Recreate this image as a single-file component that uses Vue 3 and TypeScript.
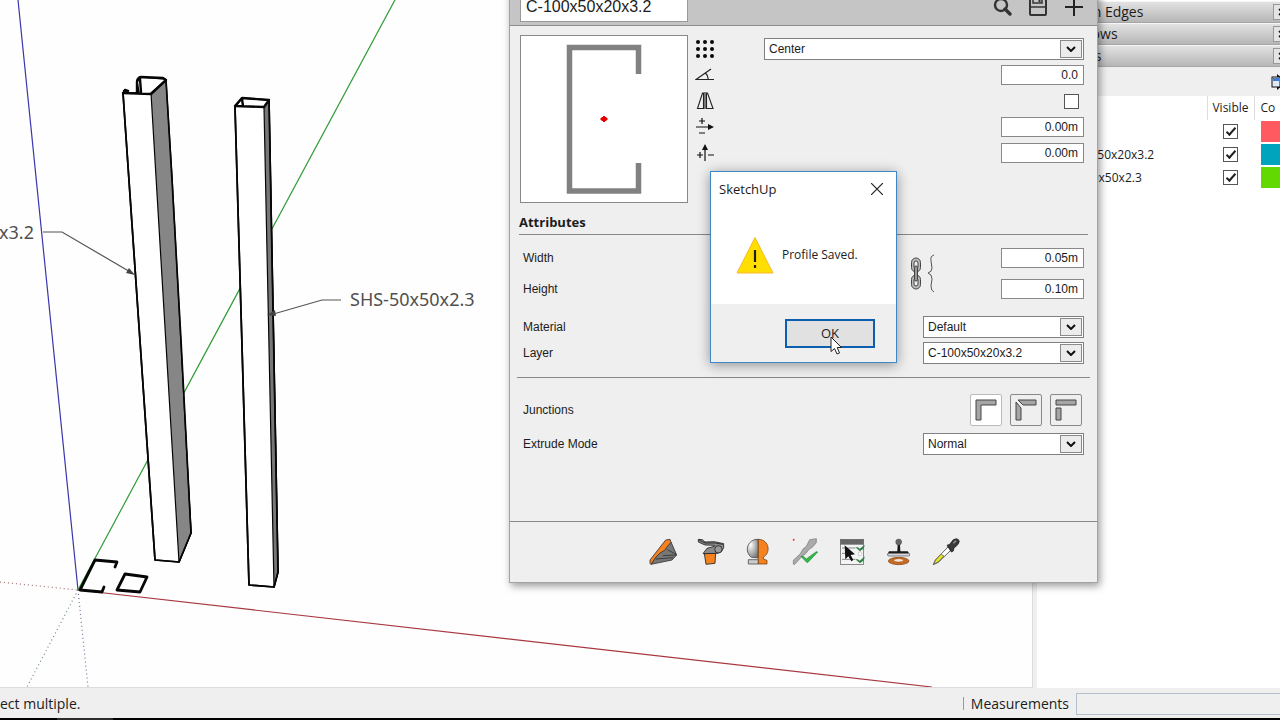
<script setup lang="ts">
import { ref } from 'vue'

interface Layer {
  name: string
  visible: boolean
  swatch: string
}

const profileName = ref('C-100x50x20x3.2')
const placement = ref('Center')
const rotation = ref('0.0')
const mirrored = ref(false)
const offsetX = ref('0.00m')
const offsetY = ref('0.00m')
const profileWidth = ref('0.05m')
const profileHeight = ref('0.10m')
const material = ref('Default')
const layer = ref('C-100x50x20x3.2')
const extrudeMode = ref('Normal')
const junction = ref(0)
const measurement = ref('')

const trays = ['Soften Edges', 'Shadows', 'Layers']
const layers = ref<Layer[]>([
  { name: 'Layer0', visible: true, swatch: 'red' },
  { name: 'C-100x50x20x3.2', visible: true, swatch: 'teal' },
  { name: 'SHS-50x50x2.3', visible: true, swatch: 'green' },
])
</script>

<template>
  <div class="app">
    <div class="workspace">
      <main class="viewport">
        <svg class="scene" viewBox="0 0 1032 687" preserveAspectRatio="xMinYMin slice" aria-label="Model view">
          <g fill="none" stroke-width="1.2">
            <path d="M18 0L78 590" stroke="#3a36ad" />
            <path d="M396 -2L78 590" stroke="#2f9a33" />
            <path d="M78 590L932 687" stroke="#a83840" />
            <g stroke-dasharray="1 3">
              <path d="M0 582L78 590" stroke="#a07070" />
              <path d="M78 590L27 687" stroke="#6f9070" />
              <path d="M78 590L88 687" stroke="#6f6f9c" />
            </g>
          </g>
          <g stroke="#060606" stroke-width="1.700" stroke-linejoin="round" stroke-linecap="round">
            <path d="M123 93L139 93L137 82L140 77L165 79L191 533L179 562L155 560Z" fill="#fff" />
            <path d="M151 93L166 80L172 175L191 533L179 562Z" fill="#868686" stroke-width="1.2" />
            <path d="M166 80L172 180L181 340L191 533L179 562L155 560L123 93" fill="none" />
            <path d="M123 93L151 94L166 80L163 78L141 77Q137 78 137 82L137 93M125 90L128 91M140 79L141 92M124 91L128 91" fill="none" stroke-width="2.4" />
            <path d="M235 107L242 98L269 100L278 572L274 587L249 585Z" fill="#fff" />
            <path d="M264 107L269 100L278 572L274 587Z" fill="#777" stroke-width="1.2" />
            <path d="M235 107L249 585L274 587L278 572L269 100" fill="none" />
            <path d="M235 106L242 98L269 100L264 107ZM242 99L243 106" fill="none" stroke-width="2.4" />
            <path d="M104 587L102 592L80 590L95 560L117 562L115 567" fill="none" stroke-width="2.800" />
            <path d="M117 590L125 574L147 577L140 592Z" fill="none" stroke-width="2.800" />
          </g>
          <g fill="none" stroke="#555" stroke-width="1.2">
            <path d="M43 232H62L132 273" />
            <path d="M341 300H322L270 315" />
          </g>
          <g fill="#444">
            <path d="M135 275L126 273L129 268Z" />
            <path d="M267 315L275 310L276 316Z" />
          </g>
          <g class="scene-label">
            <text x="34" y="239" text-anchor="end">x3.2</text>
            <text x="350" y="306">SHS-50x50x2.3</text>
          </g>
        </svg>
      </main>

      <aside class="tray">
        <div class="tray-inner">
          <header v-for="t in trays" :key="t" class="tray-head">
            <span>{{ t }}</span>
            <button type="button" :aria-label="'Close ' + t">
              <svg width="8" height="8" viewBox="0 0 8 8"><path d="M1 1L7 7M7 1L1 7" stroke="#111" stroke-width="1.6" /></svg>
            </button>
          </header>
          <div class="tray-tools">
            <button type="button" aria-label="Details">
              <svg width="18" height="18" viewBox="0 0 18 18">
                <path d="M6 1L16 9L6 17V14H1V4H6Z" fill="#111" />
                <rect x="1" y="4" width="8" height="10" fill="#dfe9f7" stroke="#111" />
                <rect x="2" y="5" width="6" height="3" fill="#3f7bd8" />
              </svg>
            </button>
          </div>
          <table class="layers">
            <thead>
              <tr><th class="col-name">Name</th><th class="col-visible">Visible</th><th class="col-color">Co</th></tr>
            </thead>
            <tbody>
              <tr v-for="l in layers" :key="l.name">
                <td class="col-name">{{ l.name }}</td>
                <td class="col-visible"><input v-model="l.visible" type="checkbox" class="check" :aria-label="l.name + ' visible'"></td>
                <td class="col-color"><span class="swatch" :class="l.swatch"></span></td>
              </tr>
            </tbody>
          </table>
        </div>
      </aside>
    </div>

    <footer class="status">
      <span class="hint">ect multiple.</span>
      <label for="measure">Measurements</label>
      <input id="measure" v-model="measurement" type="text">
    </footer>
    <div class="edge"><span></span></div>

    <section class="panel" aria-label="Profile">
      <header class="panel-head">
        <input v-model="profileName" type="text" aria-label="Profile name">
        <div class="head-tools">
          <button type="button" aria-label="Search">
            <svg width="20" height="20" viewBox="0 0 20 20" fill="none" stroke="#333"><circle cx="9" cy="8" r="6" stroke-width="2.4" /><path d="M13 12L18 17" stroke-width="3.4" stroke-linecap="round" /></svg>
          </button>
          <button type="button" aria-label="Save">
            <svg width="20" height="20" viewBox="0 0 20 20" fill="none" stroke="#333" stroke-width="2"><path d="M2 1H16L18 3V17Q18 18 17 18H3Q2 18 2 17Z" /><path d="M5 1V6H14V1" stroke-width="1.500" /><path d="M11.500 1V5" /><path d="M2.500 10H17.500" stroke-width="1.500" /></svg>
          </button>
          <button type="button" aria-label="Add">
            <svg width="20" height="20" viewBox="0 0 20 20"><path d="M1 10H19M10 1V19" stroke="#222" stroke-width="2" /></svg>
          </button>
        </div>
      </header>

      <div class="panel-body">
        <div class="placement">
          <div class="preview">
            <svg width="166" height="166" viewBox="0 0 166 166">
              <path d="M117.500 38V11.500H48.500V155H117.500V127" fill="none" stroke="#818181" stroke-width="5.500" />
              <path d="M79 83L81 81H82V80H84V81H85L87 83L85 85H84V86H82V85H81Z" fill="#e60000" />
            </svg>
          </div>
          <div class="rows">
            <div class="row">
              <label for="place" aria-label="Placement point">
                <svg width="20" height="20" viewBox="0 0 20 20" fill="#0a0a0a"><circle cx="3" cy="3" r="2" /><circle cx="10" cy="3" r="2" /><circle cx="17" cy="3" r="2" /><circle cx="3" cy="10" r="2" /><circle cx="10" cy="10" r="2" /><circle cx="17" cy="10" r="2" /><circle cx="3" cy="17" r="2" /><circle cx="10" cy="17" r="2" /><circle cx="17" cy="17" r="2" /></svg>
              </label>
              <div class="select wide">
                <select id="place" v-model="placement"><option>Center</option></select>
                <span class="arrow"><svg width="10" height="6" viewBox="0 0 10 6"><path d="M1 1L5 5L9 1" fill="none" stroke="#111" stroke-width="2" /></svg></span>
              </div>
            </div>
            <div class="row">
              <label for="rot" aria-label="Rotation">
                <svg width="20" height="20" viewBox="0 0 20 20" fill="none" stroke="#222" stroke-width="1.200"><path d="M19 14.500H1L16 4M10.500 8Q13.500 11 13 14.500" /></svg>
              </label>
              <input id="rot" v-model="rotation" type="text" class="num">
            </div>
            <div class="row">
              <label for="mirror" aria-label="Mirror">
                <svg width="20" height="20" viewBox="0 0 20 20" fill="none" stroke="#222" stroke-width="1.100"><path d="M8.500 2V17.500H2.500L7.500 2ZM11.500 2V17.500H18L12.500 2ZM10 1V18" /></svg>
              </label>
              <input id="mirror" v-model="mirrored" type="checkbox" class="check mirror">
            </div>
            <div class="row">
              <label for="offx" aria-label="Horizontal offset">
                <svg width="20" height="20" viewBox="0 0 20 20" stroke="#111" stroke-width="1.200"><path d="M1 10H14M4 4H10M7 1V7M4 16H10" /><path d="M13 7L19 10L13 13Z" fill="#111" stroke="none" /></svg>
              </label>
              <input id="offx" v-model="offsetX" type="text" class="num">
            </div>
            <div class="row">
              <label for="offy" aria-label="Vertical offset">
                <svg width="20" height="20" viewBox="0 0 20 20" stroke="#111" stroke-width="1.200"><path d="M10 6V18M2 12H8M5 9V15M13 12H19" /><path d="M7 7L10 1L13 7Z" fill="#111" stroke="none" /></svg>
              </label>
              <input id="offy" v-model="offsetY" type="text" class="num">
            </div>
          </div>
        </div>

        <h2>Attributes</h2>
        <div class="dims">
          <label for="w">Width</label>
          <svg class="link" width="26" height="40" viewBox="0 0 26 40" fill="none">
            <g stroke="#444"><rect x="1.500" y="5" width="9" height="14" rx="4.500" fill="#bbb" /><rect x="4" y="8" width="4" height="8" rx="2" fill="#eee" /><rect x="1.500" y="22" width="9" height="14" rx="4.500" fill="#bbb" /><rect x="4" y="25" width="4" height="8" rx="2" fill="#eee" /><rect x="4.500" y="13" width="3" height="15" rx="1.500" fill="#999" /></g>
            <path d="M24 2Q20 3 21 8L22 15Q22 19 18 20Q22 21 22 26L21 33Q21 38 24 39" stroke="#555" />
          </svg>
          <input id="w" v-model="profileWidth" type="text" class="num">
          <label for="h">Height</label>
          <input id="h" v-model="profileHeight" type="text" class="num">
        </div>
        <div class="assign">
          <div class="line">
            <label for="mat">Material</label>
            <div class="select">
              <select id="mat" v-model="material"><option>Default</option></select>
              <span class="arrow"><svg width="10" height="6" viewBox="0 0 10 6"><path d="M1 1L5 5L9 1" fill="none" stroke="#111" stroke-width="2" /></svg></span>
            </div>
          </div>
          <div class="line">
            <label for="lay">Layer</label>
            <div class="select">
              <select id="lay" v-model="layer"><option>C-100x50x20x3.2</option></select>
              <span class="arrow"><svg width="10" height="6" viewBox="0 0 10 6"><path d="M1 1L5 5L9 1" fill="none" stroke="#111" stroke-width="2" /></svg></span>
            </div>
          </div>
        </div>
        <hr>
        <div class="line junctions">
          <span>Junctions</span>
          <div class="joints">
            <button type="button" aria-label="Mitre joint" :class="{ active: junction === 0 }" @click="junction = 0">
              <svg width="22" height="22" viewBox="0 0 22 22"><path d="M1 1H21V6H6V21H1Z" fill="#a5a5a5" stroke="#444" /></svg>
            </button>
            <button type="button" aria-label="Split joint" :class="{ active: junction === 1 }" @click="junction = 1">
              <svg width="22" height="22" viewBox="0 0 22 22" fill="#a5a5a5" stroke="#444"><path d="M3 1H21V6H8Z" /><path d="M1 3L6 9V21H1Z" /></svg>
            </button>
            <button type="button" aria-label="Butt joint" :class="{ active: junction === 2 }" @click="junction = 2">
              <svg width="22" height="22" viewBox="0 0 22 22" fill="#a5a5a5" stroke="#444"><path d="M1 1H21V6H1Z" /><path d="M1 9H6V21H1Z" /></svg>
            </button>
          </div>
        </div>
        <div class="line extrude">
          <label for="ext">Extrude Mode</label>
          <div class="select">
            <select id="ext" v-model="extrudeMode"><option>Normal</option></select>
            <span class="arrow"><svg width="10" height="6" viewBox="0 0 10 6"><path d="M1 1L5 5L9 1" fill="none" stroke="#111" stroke-width="2" /></svg></span>
          </div>
        </div>
      </div>

      <footer class="panel-foot">
        <button type="button" aria-label="Build along path">
          <svg viewBox="0 0 90 90" stroke="#333" stroke-width="2.500" stroke-linejoin="round"><path d="M69 15L86 54L72 69L9 82L30 50Z" fill="#777" /><path d="M24 66L75 62M45 56L86 54M58 38L84 52" fill="none" /><path d="M6 69L53 9L66 7L69 16L56 31L50 40L36 48L24 60L9 82L6 79Z" fill="#f5821f" /></svg>
        </button>
        <button type="button" aria-label="Profile member">
          <svg viewBox="0 0 90 90" stroke="#222" stroke-width="2.500" stroke-linejoin="round"><path d="M28 50L62 48L60 79L33 82Z" fill="#f5821f" /><path d="M10 7L22 8L30 15L58 14L86 20L86 32Q82 46 68 49L24 50L36 34L58 28L58 25L30 24L10 15Z" fill="#8b8b8b" /><circle cx="70" cy="37" r="11" fill="#999" /><path d="M12 9L30 18L60 18L84 22" fill="none" /></svg>
        </button>
        <button type="button" aria-label="Half section">
          <svg viewBox="0 0 90 90" stroke-linejoin="round"><defs><radialGradient id="ball" cx=".3" cy=".3" r=".8"><stop offset="0" stop-color="#fff" /><stop offset="1" stop-color="#777" /></radialGradient></defs><g stroke="#333" stroke-width="2"><path d="M49 7A30 30 0 0 0 28 61L49 63Z" fill="url(#ball)" /><rect x="19" y="68" width="30" height="13" fill="#ccc" /></g><path d="M49 7C84 8 86 50 64 60V66L75 70V81H49Z" fill="#f5821f" stroke="#5a3008" stroke-width="2" /></svg>
        </button>
        <button type="button" aria-label="Apply to path">
          <svg viewBox="0 0 90 90"><circle cx="14" cy="8" r="3" fill="#e33" /><path d="M13 70L34 50L42 36L52 28L62 8L82 5V17L70 31L61 36L50 50L40 57L16 83L13 81Z" fill="#aaa" stroke="#777" stroke-width="2" /><path d="M36 58L43 58L52 66L82 44L86 45L57 76L53 76Z" fill="#35b84a" stroke="#168a2c" stroke-width="2" /></svg>
        </button>
        <button type="button" aria-label="Select by attributes">
          <svg viewBox="0 0 90 90"><rect x="13" y="7" width="70" height="75" fill="#f4f4f4" stroke="#555" stroke-width="2" /><rect x="13" y="7" width="70" height="16" fill="#666" /><path d="M18 33H58M18 49H50M18 67H58" stroke="#888" stroke-width="3" /><rect x="67" y="45" width="10" height="10" fill="#fff" stroke="#888" /><path d="M58 31H66L71 35L86 23L84 34L72 43ZM58 67H66L71 71L86 58L84 70L72 79Z" fill="#35834a" /><path d="M26 25L28 67L37 58L46 73L52 69L44 54L57 52Z" fill="#111" /></svg>
        </button>
        <button type="button" aria-label="Stamp">
          <svg viewBox="0 0 90 90"><ellipse cx="47" cy="72" rx="31" ry="11" fill="#c76a22" stroke="#7c3d10" stroke-width="2" /><ellipse cx="47" cy="70" rx="14" ry="5" fill="#f6e6d8" stroke="#7c3d10" /><path d="M18 43H43L44 22H51L52 43H74L79 50V55H14V50Z" fill="#161616" /><rect x="14" y="49" width="66" height="8" rx="3" fill="#d6d6dc" stroke="#555" stroke-width="2" /><circle cx="47" cy="15" r="9" fill="#666" stroke="#333" /></svg>
        </button>
        <button type="button" aria-label="Eyedropper">
          <svg viewBox="0 0 90 90"><path d="M10 83L16 69L54 30L63 39L25 76Z" fill="#fff" stroke="#444" stroke-width="2.500" /><path d="M11 81L17 69L33 52L42 57L24 75Z" fill="#e6e321" stroke="#555" stroke-width="2" /><path d="M51 25L59 22L69 9Q84 0 88 13Q87 23 72 33L70 42L64 45Z" fill="#3a3a3a" stroke="#111" stroke-width="2" /><path d="M70 19L78 11" stroke="#999" stroke-width="4" /></svg>
        </button>
      </footer>
    </section>

    <section class="dialog" role="alertdialog" aria-labelledby="dlg-title">
      <header>
        <span id="dlg-title">SketchUp</span>
        <button type="button" aria-label="Close">
          <svg width="12" height="12" viewBox="0 0 12 12"><path d="M0 0L12 12M12 0L0 12" stroke="#222" stroke-width="1.200" /></svg>
        </button>
      </header>
      <div class="message">
        <svg width="38" height="38" viewBox="0 0 38 38"><path d="M19 1.500L37 37H1Z" fill="#ffde00" stroke="#f5b82e" stroke-linejoin="round" /><path d="M19 14V26M19 29V32" stroke="#222" stroke-width="2.200" /></svg>
        <p>Profile Saved.</p>
      </div>
      <div class="actions"><button type="button">OK</button></div>
    </section>

    <svg class="cursor" width="14" height="20" viewBox="0 0 14 20"><path d="M1 1V15.500L4.500 12.500L7 18L9.500 17L7.200 11.500H11.500Z" fill="#fff" stroke="#222" /></svg>
  </div>
</template>

<style>
body {
  margin: 0;
}
</style>

<style scoped>
.app {
  position: relative;
  display: flex;
  flex-direction: column;
  min-height: 100vh;
  overflow: hidden;
  background: #efefef;
  color: #1c1c1c;
  font: 12px/16px "Liberation Sans", Arial, sans-serif;
}
.app *,
.app *::before {
  box-sizing: border-box;
}
button,
input,
select {
  margin: 0;
  padding: 0;
  border: 0;
  border-radius: 0;
  background: none;
  color: inherit;
  font: inherit;
  outline: 0;
}
button {
  display: flex;
  align-items: center;
  justify-content: center;
}
svg {
  display: block;
}

.workspace {
  display: flex;
  flex: 1;
  gap: 4px;
}
.viewport {
  position: relative;
  flex: 1;
  min-width: 0;
  overflow: hidden;
  background: #fefefe;
  border-right: 1px solid #dcdcdc;
  border-bottom: 1px solid #dcdcdc;
}
.scene {
  width: 100%;
  height: auto;
}
.scene-label {
  fill: #505050;
  font: 18px "Noto Sans", sans-serif;
}

.tray {
  width: 243px;
  overflow: hidden;
  background: #fff;
  font: 12px/16px "Open Sans", sans-serif;
}
.tray-inner {
  width: 256px;
}
.tray-head {
  display: flex;
  align-items: center;
  justify-content: space-between;
  height: 22px;
  padding: 0 3px 0 22px;
  border-top: 1px solid #f6f6f6;
  border-bottom: 1px solid #a6a6a6;
  background: linear-gradient(#e2e2e2, #b6b6b6);
  font-size: 14px;
}
.tray-head:first-child {
  margin-top: 1px;
}
.tray-head button {
  width: 17px;
  height: 16px;
  border: 1px solid #999;
  background: #e4e4e4;
}
.tray-tools {
  display: flex;
  align-items: center;
  justify-content: flex-end;
  height: 29px;
  padding-right: 4px;
  background: #efefef;
}
.layers {
  width: 100%;
  border-collapse: collapse;
  table-layout: fixed;
}
.layers th {
  height: 24px;
  padding: 0;
  border-right: 1px solid #ddd;
  font-weight: 400;
}
.layers td {
  height: 23px;
  padding: 0;
}
.layers .col-name {
  width: 170px;
  padding-left: 22px;
  text-align: left;
}
.layers .col-visible {
  width: 47px;
  text-align: center;
}
.layers .col-color {
  padding-left: 7px;
  text-align: left;
}
.layers th.col-color {
  padding-left: 6px;
}
.col-visible .check {
  margin: 0 auto;
}
.swatch {
  display: block;
  height: 21px;
}
.red {
  background: #ff5a5f;
}
.teal {
  background: #00a5bd;
}
.green {
  background: #62d900;
}

.check {
  display: grid;
  place-items: center;
  width: 15px;
  height: 15px;
  appearance: none;
  border: 1px solid #555;
  background: #fff;
}
.check:checked::before {
  content: "";
  width: 10px;
  height: 5px;
  margin-bottom: 3px;
  border-left: 2px solid #222;
  border-bottom: 2px solid #222;
  transform: rotate(-48deg);
}

.status {
  display: flex;
  align-items: center;
  height: 30px;
  padding-top: 1px;
  background: #efefef;
  font: 14px/18px "Open Sans", sans-serif;
}
.hint {
  flex: 1;
}
.status label {
  padding-left: 8px;
  background: linear-gradient(#999, #999) left center / 1px 13px no-repeat;
}
.status input {
  width: 204px;
  height: 22px;
  margin-left: 7px;
  border: 1px solid #b4bfcd;
  border-right: 0;
}
.edge {
  height: 2px;
  padding-left: 57px;
  background: #000;
}
.edge span {
  display: block;
  width: 56px;
  height: 2px;
  background: #2c2c2c;
}

.panel {
  position: absolute;
  top: -21px;
  left: 509px;
  width: 589px;
  border: 1px solid #a2a2a2;
  background: #efefef;
  box-shadow: 2px 3px 8px rgba(0, 0, 0, 0.4);
}
.panel-head {
  display: flex;
  align-items: center;
  justify-content: space-between;
  height: 46px;
  padding: 8px 13px 0 10px;
  border-bottom: 1px solid #8c8c8c;
  background: #c5c5c5;
}
.panel-head input {
  width: 168px;
  height: 30px;
  padding-left: 5px;
  border: 1px solid #999;
  background: #fff;
  font-size: 16px;
}
.head-tools {
  display: flex;
  gap: 16px;
}
.panel-body {
  min-height: 495px;
  padding-top: 9px;
}
.placement {
  display: flex;
  gap: 7px;
  padding: 0 13px 0 10px;
}
.preview {
  width: 168px;
  height: 168px;
  border: 1px solid #888;
  background: #fff;
}
.rows {
  flex: 1;
  padding-top: 1px;
}
.row {
  display: flex;
  align-items: center;
  justify-content: space-between;
  height: 26px;
}
.num {
  width: 83px;
  height: 20px;
  padding-right: 5px;
  border: 1px solid #888;
  background: #fff;
  text-align: right;
}
.mirror {
  margin-right: 5px;
}
.select {
  position: relative;
  width: 161px;
}
.wide {
  width: 320px;
}
.select select {
  display: block;
  width: 100%;
  height: 22px;
  padding-left: 4px;
  appearance: none;
  border: 1px solid #808080;
  background: #fff;
}
.arrow {
  position: absolute;
  top: 2px;
  right: 2px;
  display: grid;
  place-items: center;
  width: 22px;
  height: 18px;
  border: 1px solid #8a8a8a;
  background: #ececec;
  pointer-events: none;
}
h2 {
  margin: 8px 9px 0;
  border-bottom: 1px solid #888;
  font: bold 13px/23px "Open Sans", sans-serif;
}
.dims {
  display: grid;
  grid-template-columns: 1fr 26px 83px;
  grid-template-rows: 31px 31px;
  column-gap: 65px;
  align-items: center;
  padding: 7px 13px 0;
}
.link {
  grid-row: 1 / 3;
  grid-column: 2;
}
.dims .num {
  grid-column: 3;
}
.assign {
  padding-top: 10px;
}
.line {
  display: flex;
  align-items: center;
  justify-content: space-between;
  height: 26px;
  padding: 0 13px;
}
hr {
  margin: 11px 7px 0;
  border: 0;
  border-top: 1px solid #888;
}
.junctions {
  height: 34px;
  margin-top: 15px;
  padding-right: 15px;
}
.joints {
  display: flex;
  gap: 8px;
}
.joints button {
  width: 32px;
  height: 32px;
  border: 1px solid #888;
  border-radius: 2px;
}
.joints .active {
  border-color: #bbb;
  background: #fff;
}
.extrude {
  margin-top: 4px;
}
.panel-foot {
  display: flex;
  align-items: center;
  justify-content: center;
  gap: 17px;
  height: 61px;
  border-top: 1px solid #888;
}
.panel-foot svg {
  width: 30px;
  height: 30px;
}

.dialog {
  position: absolute;
  top: 171px;
  left: 710px;
  width: 187px;
  border: 1px solid #3f87c7;
  background: #fff;
  box-shadow: 0 2px 12px rgba(0, 0, 0, 0.4);
  font: 12px/16px "Open Sans", sans-serif;
}
.dialog header {
  display: flex;
  align-items: center;
  justify-content: space-between;
  height: 34px;
  padding: 0 13px 0 8px;
  font-size: 13px;
}
.message {
  display: flex;
  align-items: center;
  gap: 8px;
  height: 98px;
  padding: 0 25px;
}
.message p {
  margin: 0;
  white-space: nowrap;
}
.actions {
  display: flex;
  align-items: center;
  justify-content: flex-end;
  height: 58px;
  padding-right: 21px;
  background: #efefef;
}
.actions button {
  width: 90px;
  height: 29px;
  border: 2px solid #0b5fae;
  background: #e1e1e1;
  font-size: 13px;
}
.cursor {
  position: absolute;
  top: 336px;
  left: 830px;
  pointer-events: none;
}
</style>
